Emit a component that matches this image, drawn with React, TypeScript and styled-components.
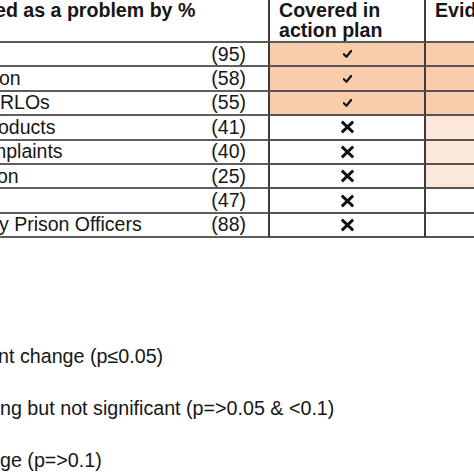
import * as React from 'react';
import styled, { createGlobalStyle } from 'styled-components';

const GlobalStyle = createGlobalStyle`
  html, body {
    margin: 0;
    padding: 0;
    background: #ffffff;
    overflow: hidden;
  }
  body {
    font-family: "Liberation Sans", Arial, sans-serif;
    color: #161616;
  }
`;

const rows = [
  { label: '', shift: 0, count: 95, covered: true, evidence: 'strong' },
  { label: 'on', shift: 1, count: 58, covered: true, evidence: 'strong' },
  { label: 'RLOs', shift: 0, count: 55, covered: true, evidence: 'strong' },
  { label: 'oducts', shift: 2, count: 41, covered: false, evidence: 'light' },
  { label: 'mplaints', shift: 10, count: 40, covered: false, evidence: 'light' },
  { label: 'on', shift: 3, count: 25, covered: false, evidence: 'light' },
  { label: '', shift: 0, count: 47, covered: false, evidence: 'none' },
  { label: 'y Prison Officers', shift: 1, count: 88, covered: false, evidence: 'none' },
];

const legend = [
  { text: 'nt change (p\u22640.05)', shift: 2 },
  { text: 'ng but not significant (p=>0.05 & <0.1)', shift: 0 },
  { text: 'ge (p=>0.1)', shift: 0 },
];

const fills: Record<string, string> = {
  strong: '#f9cdab',
  light: '#fce8da',
  none: '#ffffff',
};

const Page = styled.div`
  width: 474px;
  height: 474px;
  overflow: hidden;
`;

const Table = styled.div`
  display: grid;
  grid-template-columns: 268px 156px 50px;
  width: 474px;
`;

const HeadCell = styled.div<{ $divider?: boolean; $pad?: number }>`
  height: 43px;
  box-sizing: border-box;
  border-bottom: 2px solid #5a5a5a;
  border-left: ${p => (p.$divider ? '2px solid #3c3c3c' : 'none')};
  padding-left: ${p => p.$pad ?? 0}px;
  font-weight: bold;
  font-size: 19.6px;
  line-height: 20px;
  white-space: nowrap;
  overflow: hidden;
`;

const Title = styled.span<{ $shift: number }>`
  display: block;
  margin-left: -${p => p.$shift}px;
`;

const LabelCell = styled.div`
  height: 24.4px;
  box-sizing: border-box;
  border-bottom: 2px solid #5e5e5e;
  display: flex;
  align-items: center;
  font-size: 19.5px;
  white-space: nowrap;
`;

const LabelText = styled.span<{ $shift: number }>`
  flex: 1;
  margin-left: -${p => p.$shift}px;
`;

const Count = styled.span`
  margin-right: 22px;
`;

const MarkCell = styled.div<{ $fill: string }>`
  height: 24.4px;
  box-sizing: border-box;
  border-bottom: 2px solid #5a5250;
  border-left: 2px solid #3c3c3c;
  background: ${p => p.$fill};
  display: flex;
  align-items: center;
  justify-content: center;
`;

const Legend = styled.div`
  margin-top: 107px;
  display: flex;
  flex-direction: column;
  gap: 30px;
  font-size: 19.7px;
  line-height: 22px;
  white-space: nowrap;
`;

const LegendLine = styled.div<{ $shift: number }>`
  margin-left: -${p => p.$shift}px;
`;

const Check = () => (
  <svg width="9" height="8" viewBox="0 0 9 8">
    <path d="M0.8 4.2 L3.4 6.8 L8.2 0.9" fill="none" stroke="#141414" strokeWidth="2.2" strokeLinecap="round" strokeLinejoin="round" />
  </svg>
);

const Cross = () => (
  <svg width="15" height="14" viewBox="0 0 15 14">
    <path d="M1.8 1.6 L13.2 12.4 M13.2 1.6 L1.8 12.4" fill="none" stroke="#111111" strokeWidth="2.9" />
  </svg>
);

export default function App() {
  return (
    <Page>
      <GlobalStyle />
      <Table>
        <HeadCell>
          <Title $shift={5}>ed as a problem by %</Title>
        </HeadCell>
        <HeadCell $divider $pad={9}>
          Covered in
          <br />
          action plan
        </HeadCell>
        <HeadCell $divider $pad={9}>
          Evidence
        </HeadCell>
        {rows.map((row, i) => (
          <React.Fragment key={i}>
            <LabelCell>
              <LabelText $shift={row.shift}>{row.label}</LabelText>
              <Count>({row.count})</Count>
            </LabelCell>
            <MarkCell $fill={row.covered ? fills.strong : fills.none}>
              {row.covered ? <Check /> : <Cross />}
            </MarkCell>
            <MarkCell $fill={fills[row.evidence]} />
          </React.Fragment>
        ))}
      </Table>
      <Legend>
        {legend.map((l, i) => (
          <LegendLine key={i} $shift={l.shift}>{l.text}</LegendLine>
        ))}
      </Legend>
    </Page>
  );
}
